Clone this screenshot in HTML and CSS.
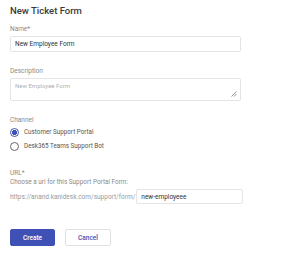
FILE: index.html
```html
<!DOCTYPE html>
<html lang="en">
<head>
  <meta charset="UTF-8">
  <title>New Ticket Form</title>
  <link rel="stylesheet" href="styles.css">
</head>
<body>
  <div class="form">
    <h1 class="title">New Ticket Form</h1>

    <label class="label first">Name*</label>
    <input class="field" type="text" value="New Employee Form">

    <label class="label gap">Description</label>
    <div class="area-wrap">
      <textarea class="area" placeholder="New Employee Form"></textarea>
      <svg class="grip" width="6" height="6" viewBox="0 0 6 6">
        <path d="M5.5 0.5 L0.5 5.5 M5.5 3 L3 5.5" stroke="#888" stroke-width="0.9" fill="none"/>
      </svg>
    </div>

    <label class="label gap">Channel</label>
    <div class="radios">
      <div class="radio-row"><span class="radio checked"></span>Customer Support Portal</div>
      <div class="radio-row"><span class="radio"></span>Desk365 Teams Support Bot</div>
    </div>

    <label class="label url-label">URL*</label>
    <div class="hint">Choose a url for this Support Portal Form:</div>
    <div class="url-row">
      <span class="prefix">https://anand.kanidesk.com/support/form/</span>
      <input class="field url-field" type="text" value="new-employeee">
    </div>

    <div class="actions">
      <button class="btn primary">Create</button>
      <button class="btn secondary">Cancel</button>
    </div>
  </div>
</body>
</html>
```

FILE: styles.css
```css
/* Base */
body {
  margin: 0;
  padding: 0;
  background: #fff;
  font-family: Roboto, "Liberation Sans", Arial, sans-serif;
  color: #333;
}
.form {
  display: flex;
  flex-direction: column;
  padding: 4px 10px 0 10px;
  width: 233px;
}
.title {
  margin: 0;
  font-size: 9.5px;
  line-height: 14px;
  font-weight: 500;
  color: #3a3a3a;
}
/* Labels */
.label {
  font-size: 6.5px;
  line-height: 10px;
  color: #8a8a8a;
}
.label.first {
  margin-top: 6px;
}
.label.gap {
  margin-top: 14px;
}
/* Inputs */
.field {
  box-sizing: border-box;
  margin: 2px 0 0 0;
  width: 231px;
  height: 16px;
  padding: 0 4px;
  border: 1px solid #e4e4e4;
  border-radius: 2px;
  font-family: inherit;
  font-size: 6.5px;
  color: #333;
  outline: none;
}
.area-wrap {
  position: relative;
  margin-top: 2px;
  width: 231px;
  height: 23px;
}
.area {
  display: block;
  box-sizing: border-box;
  margin: 0;
  width: 231px;
  height: 23px;
  padding: 3px 4px;
  border: 1px solid #e4e4e4;
  border-radius: 2px;
  font-family: inherit;
  font-size: 6px;
  color: #333;
  resize: none;
}
.area::placeholder {
  color: #b0b0b0;
}
.grip {
  position: absolute;
  right: 4px;
  bottom: 4px;
}
/* Radios */
.radios {
  display: flex;
  flex-direction: column;
  gap: 2px;
  margin-top: 1px;
}
.radio-row {
  display: flex;
  align-items: center;
  gap: 5px;
  height: 12px;
  font-size: 6.3px;
  color: #555;
}
.radio {
  box-sizing: border-box;
  width: 9px;
  height: 9px;
  border: 1px solid #666;
  border-radius: 50%;
}
.radio.checked {
  border-color: #3f51b5;
  background: radial-gradient(circle, #3f51b5 0 2.3px, #fff 2.8px);
}
/* URL */
.url-label {
  margin-top: 17px;
  line-height: 9px;
}
.hint {
  font-size: 6.4px;
  line-height: 9px;
  color: #8a8a8a;
}
.url-row {
  display: flex;
  align-items: center;
  margin-top: 2px;
}
.prefix {
  font-size: 6.5px;
  color: #9a9a9a;
}
.url-field {
  margin: 0 0 0 1px;
  width: 108px;
  height: 15px;
  padding: 0 4px;
}
/* Buttons */
.actions {
  display: flex;
  gap: 10px;
  margin-top: 25px;
}
.btn {
  height: 17px;
  width: 46px;
  border-radius: 2px;
  font-family: inherit;
  font-size: 6.5px;
  font-weight: 500;
  padding: 0;
}
.primary {
  width: 45px;
  background: #3f51b5;
  border: 1px solid #3f51b5;
  color: #fff;
}
.secondary {
  background: #fff;
  border: 1px solid #e0e0e0;
  color: #3f51b5;
}
```
